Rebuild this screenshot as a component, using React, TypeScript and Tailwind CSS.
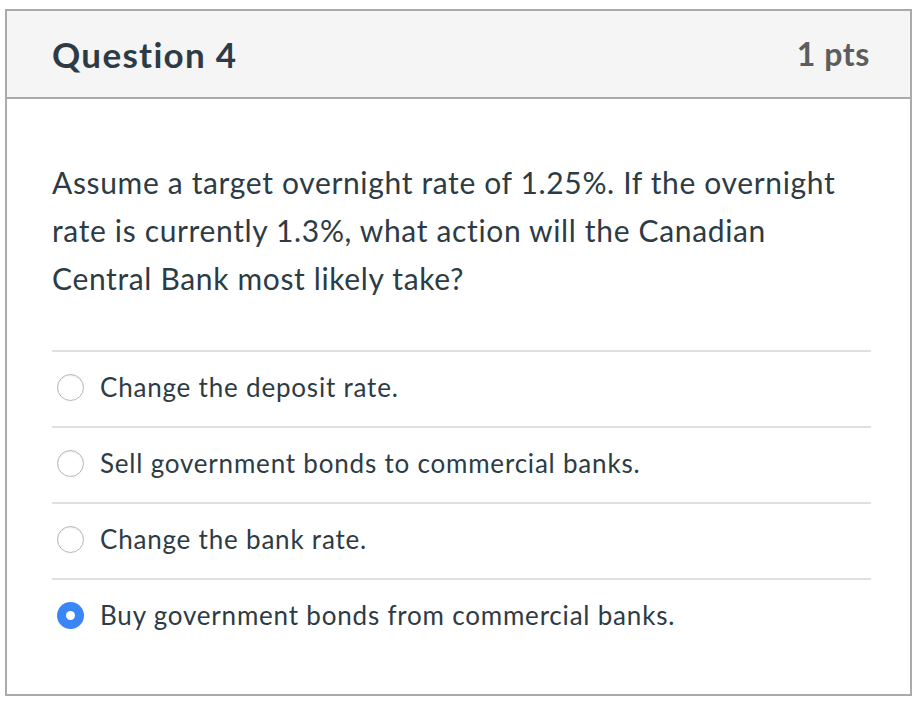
const ANSWERS = [
  { label: 'Change the deposit rate.', checked: false },
  { label: 'Sell government bonds to commercial banks.', checked: false },
  { label: 'Change the bank rate.', checked: false },
  { label: 'Buy government bonds from commercial banks.', checked: true },
];

function Radio({ checked }: { checked: boolean }) {
  if (checked) {
    return (
      <span className="flex h-[27px] w-[27px] shrink-0 items-center justify-center rounded-full bg-[#3b86f7]">
        <span className="h-[9px] w-[9px] rounded-full bg-white" />
      </span>
    );
  }
  return (
    <span className="h-[27px] w-[27px] shrink-0 rounded-full border-[1.5px] border-[#b5b5b5] bg-white shadow-[inset_0_1px_2px_rgba(0,0,0,0.08)]" />
  );
}

export default function App() {
  return (
    <div className="min-h-screen bg-white pt-[9px] pl-[5px] font-['Lato','Open_Sans',sans-serif] text-[#2d3b45]">
      <div className="h-[687px] w-[907px] border-2 border-[#aaaaaa] bg-white">
        <div className="flex h-[88px] items-center justify-between border-b-2 border-[#aaaaaa] bg-[#f5f5f5] pr-[40px] pl-[45px]">
          <h2 className="text-[35px] font-bold tracking-[1.3px] text-[#2d3b45]">Question 4</h2>
          <span className="text-[32px] font-bold tracking-[0.6px] text-[#5d5d5d]">1 pts</span>
        </div>

        <div className="pt-[59px] pr-[45px] pl-[45px]">
          <p className="text-[30px] leading-[48px] tracking-[0.65px]">
            Assume a target overnight rate of 1.25%. If the overnight rate is currently 1.3%, what action will the Canadian Central Bank most likely take?
          </p>

          <div className="mt-[48px] mr-[-6px]">
            {ANSWERS.map((a) => (
              <div
                key={a.label}
                className="flex h-[76px] items-center gap-[16px] border-t-2 border-[#e0e0e0] pb-[3px] pl-[5px]"
              >
                <Radio checked={a.checked} />
                <span className="text-[26px] tracking-[0.8px]">{a.label}</span>
              </div>
            ))}
          </div>
        </div>
      </div>
    </div>
  );
}
